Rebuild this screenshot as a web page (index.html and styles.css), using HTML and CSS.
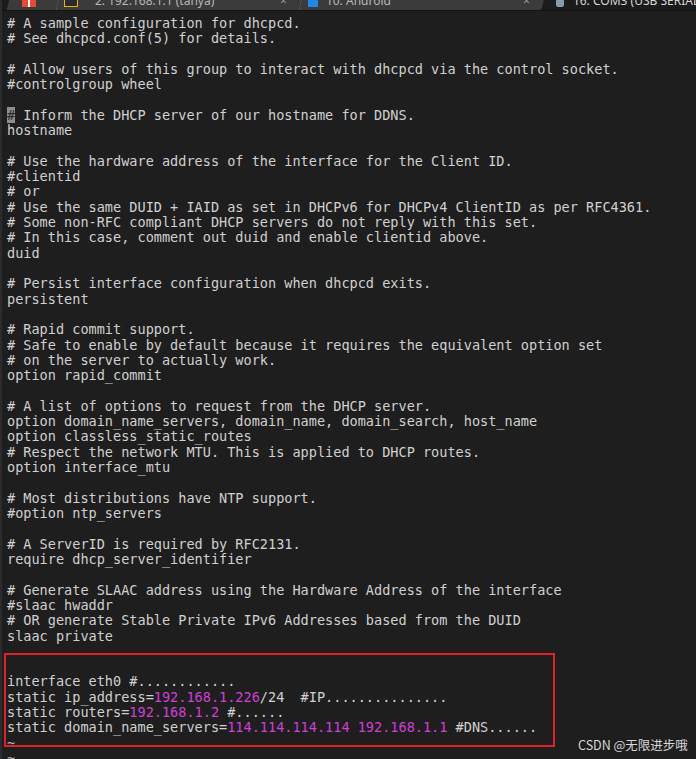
FILE: index.html
```html
<!DOCTYPE html>
<html>
<head>
<meta charset="utf-8">
<link rel="stylesheet" href="styles.css">
</head>
<body>
<div class="term">
  <div class="tabbar">
    <div class="lead"></div>
    <div class="tab first">
      <span class="ico ico-red"></span>
    </div>
    <div class="tab second">
      <span class="ico ico-yellow"></span>
      <span class="tlabel">2. 192.168.1.1 (tanya)</span>
      <span class="tclose">×</span>
    </div>
    <div class="tab third">
      <span class="ico ico-blue"></span>
      <span class="tlabel">10. Android</span>
      <span class="tclose">×</span>
    </div>
    <div class="tab active">
      <span class="ico ico-gray"></span>
      <span class="tlabel">16. COM3 (USB SERIAL CH340 (COM3))</span>
    </div>
  </div>
  <div class="code">
<div class="ln"># A sample configuration for dhcpcd.</div>
<div class="ln"># See dhcpcd.conf(5) for details.</div>
<div class="ln"> </div>
<div class="ln"># Allow users of this group to interact with dhcpcd via the control socket.</div>
<div class="ln">#controlgroup wheel</div>
<div class="ln"> </div>
<div class="ln"><span class="cursor">#</span> Inform the DHCP server of our hostname for DDNS.</div>
<div class="ln">hostname</div>
<div class="ln"> </div>
<div class="ln"># Use the hardware address of the interface for the Client ID.</div>
<div class="ln">#clientid</div>
<div class="ln"># or</div>
<div class="ln"># Use the same DUID + IAID as set in DHCPv6 for DHCPv4 ClientID as per RFC4361.</div>
<div class="ln"># Some non-RFC compliant DHCP servers do not reply with this set.</div>
<div class="ln"># In this case, comment out duid and enable clientid above.</div>
<div class="ln">duid</div>
<div class="ln"> </div>
<div class="ln"># Persist interface configuration when dhcpcd exits.</div>
<div class="ln">persistent</div>
<div class="ln"> </div>
<div class="ln"># Rapid commit support.</div>
<div class="ln"># Safe to enable by default because it requires the equivalent option set</div>
<div class="ln"># on the server to actually work.</div>
<div class="ln">option rapid_commit</div>
<div class="ln"> </div>
<div class="ln"># A list of options to request from the DHCP server.</div>
<div class="ln">option domain_name_servers, domain_name, domain_search, host_name</div>
<div class="ln">option classless_static_routes</div>
<div class="ln"># Respect the network MTU. This is applied to DHCP routes.</div>
<div class="ln">option interface_mtu</div>
<div class="ln"> </div>
<div class="ln"># Most distributions have NTP support.</div>
<div class="ln">#option ntp_servers</div>
<div class="ln"> </div>
<div class="ln"># A ServerID is required by RFC2131.</div>
<div class="ln">require dhcp_server_identifier</div>
<div class="ln"> </div>
<div class="ln"># Generate SLAAC address using the Hardware Address of the interface</div>
<div class="ln">#slaac hwaddr</div>
<div class="ln"># OR generate Stable Private IPv6 Addresses based from the DUID</div>
<div class="ln">slaac private</div>
<div class="ln"> </div>
<div class="ln"> </div>
<div class="ln">interface eth0 #............</div>
<div class="ln">static ip_address=<span class="num">192.168.1.226</span>/24  #IP...............</div>
<div class="ln">static routers=<span class="num">192.168.1.2</span> #......</div>
<div class="ln">static domain_name_servers=<span class="num">114.114.114.114</span> <span class="num">192.168.1.1</span> #DNS......</div>
<div class="ln tilde">~</div>
<div class="ln tilde">~</div>
  </div>
  <div class="mark"></div>
  <div class="wm">CSDN @无限进步哦</div>
</div>
</body>
</html>
```

FILE: styles.css
```css
html, body {
  margin: 0;
  padding: 0;
  background: #1e1e1e;
}
.term {
  position: relative;
  width: 696px;
  height: 759px;
  overflow: hidden;
  background: #1e1e1e;
  border-left: 2px solid #2c2c2c;
  box-sizing: border-box;
}
.tabbar {
  height: 10px;
  display: flex;
  align-items: flex-end;
  overflow: hidden;
  background: #1b1b1b;
  border-bottom: 1px solid #141414;
  font-family: "Noto Sans", "DejaVu Sans", sans-serif;
  font-size: 12px;
}
.lead {
  width: 7px;
  height: 20px;
  flex: none;
}
.tab {
  flex: none;
  height: 20px;
  display: flex;
  align-items: center;
  background: #3b3b3b;
  color: #b8b8b8;
  border-right: 1px solid #555;
  box-sizing: border-box;
  padding-left: 8px;
  transform: skewX(-12deg);
}
.tab > * { transform: skewX(12deg); }
.tab.first { width: 50px; padding-left: 13px; }
.tab.second { width: 243px; padding-left: 5px; }
.tab.third { width: 242px; padding-left: 6px; border-right: none; border-radius: 0 0 4px 0; }
.tab.active {
  background: #1b1b1b;
  color: #d6d6d6;
  border: none;
  padding-left: 12px;
}
.ico {
  width: 14px;
  height: 14px;
  flex: none;
  margin-right: 17px;
}
.ico-red { background: linear-gradient(90deg, #e84a3a 0 40%, #f4f4f4 40% 60%, #e84a3a 60%); }
.ico-yellow { background: #2a2a2a; border: 1px solid #e8b400; box-sizing: border-box; }
.ico-blue { background: #1e88e5; width: 10px; margin-right: 8px; }
.ico-gray { background: #8a9aa8; width: 8px; margin-right: 9px; border-radius: 2px; }
.tlabel { white-space: nowrap; flex: 1; }
.tclose { color: #9a9a9a; margin-right: 14px; }
.code {
  padding: 5px 0 0 5px;
  font-family: "DejaVu Sans Mono", "Liberation Mono", monospace;
  font-size: 13.55px;
  line-height: 15.32px;
  color: #d0d0d0;
}
.ln {
  white-space: pre;
  height: 15.32px;
}
.num { color: #cf3fd8; }
.cursor {
  background: #8e8e8e;
  color: #2a2a2a;
}
.tilde { color: #b0b0b0; }
.mark {
  position: absolute;
  left: 2px;
  top: 653px;
  width: 551px;
  height: 94px;
  border: 2px solid #e0232b;
  box-sizing: border-box;
}
.wm {
  position: absolute;
  left: 576px;
  top: 736px;
  font-family: "Noto Sans CJK SC", "Noto Sans", sans-serif;
  font-size: 12.5px;
  line-height: 18px;
  color: #d8d8d8;
  white-space: nowrap;
}
```
